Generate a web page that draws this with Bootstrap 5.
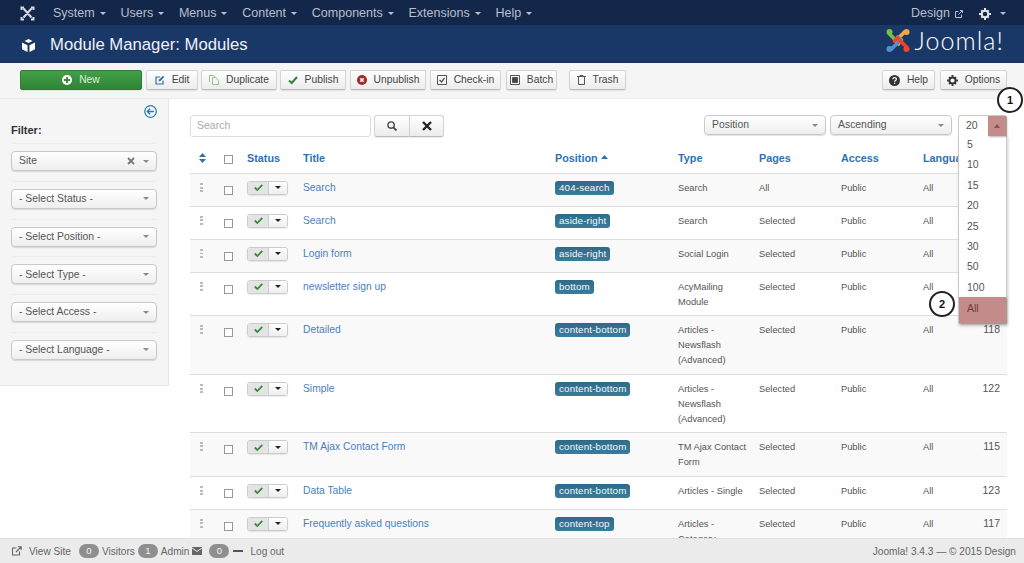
<!DOCTYPE html>
<html lang="en">
<head>
<meta charset="utf-8">
<title>Module Manager: Modules</title>
<link rel="stylesheet" href="https://cdn.jsdelivr.net/npm/bootstrap@5.3.0/dist/css/bootstrap.min.css">
<style>
html,body{height:563px;overflow:hidden}
body{font-family:"Liberation Sans",Arial,sans-serif;font-size:10.5px;color:#555;background:#fff;position:relative}
svg{display:block;flex:none}
.top-bar{height:25px;background:#13274a;color:#b9bfcb;font-size:12.5px;padding:2px 18px 0 20px}
.top-item{display:flex;align-items:center;gap:5px}
.top-menu{gap:14.800px;margin-left:18px}
.caret-d{width:0;height:0;border-left:3px solid transparent;border-right:3px solid transparent;border-top:3px solid currentColor;display:inline-block;flex:none}
.title-bar{height:38px;background:#1a3867;color:#eef1f6;padding:0 20px 0 21px;border-bottom:1px solid #17325c}
.title-wrap{padding-top:3px}
.title-bar h1{font-size:16.700px;font-weight:400;margin:0 0 0 14px}
.logo-wrap{margin-bottom:6px}
.logo-txt{font-family:Lato,"Liberation Sans",sans-serif;font-weight:300;font-size:25px;color:#fff;margin-left:3px;letter-spacing:1.100px;line-height:1}
.tool-bar{height:36px;background:#f5f5f5;border-bottom:1px solid #ebebeb;padding:7px 17px 0 20px;gap:4px}
.tbtn{display:flex;align-items:center;justify-content:center;gap:7px;height:20px;font-size:10.3px;color:#444;background:linear-gradient(#fff,#ececec);border:1px solid #d3d3d3;border-bottom-color:#bbb;border-radius:2px;box-shadow:0 1px 1px rgba(0,0,0,.08);white-space:nowrap}
.tbtn-new{width:122px;background:linear-gradient(#43a047,#2f8436);border-color:#2f7d34;color:#dcefdc}
.wid-edit{width:52px}.wid-dup{width:76px;margin-left:-1px}.wid-pub{width:66px;margin-left:-1px}.wid-unp{width:76px}.wid-chk{width:71px}.wid-bat{width:51px;margin-left:1px}.wid-tra{width:57px;margin-left:8px}.wid-hlp{width:53px}.wid-opt{width:67px;margin-left:1px}
.content-row{flex:1 1 auto;min-height:0;overflow:hidden}
.side-panel{width:169px;height:287px;background:#f5f5f5;border-right:1px solid #e6e6e6;border-bottom:1px solid #e6e6e6;padding:6px 11px 0 11px;flex:none}
.side-head{font-weight:700;font-size:11px;color:#333;height:20px;padding-top:5px;margin-bottom:6px}
.back-row{height:12px}
.flt{height:37.800px;border-top:1px solid #ececec;padding-top:7px}
.pick{height:20px;display:flex;align-items:center;justify-content:space-between;padding:0 7px;background:linear-gradient(#fff,#eee);border:1px solid #c9c9c9;border-radius:4px;box-shadow:0 1px 1px rgba(0,0,0,.12);font-size:10.4px;color:#555;white-space:nowrap}
.caret-g{color:#888}
.main-col{flex:1 1 auto;min-width:0;padding:16px 17px 0 21px}
.search-row{height:25px;margin-bottom:8px}
.search-box{width:181px;height:22px;border:1px solid #ddd;border-radius:3px;padding:0 6px;color:#aaa;display:flex;align-items:center;font-size:10.5px}
.sbtn{height:22px;padding:0}
.sbtn-first{width:35px;margin-left:3px;border-radius:3px 0 0 3px;border-right:0}
.sbtn-second{width:35px;border-radius:0 3px 3px 0}
.sel1{width:122px;height:20px}
.sel2{margin-left:4px}
.sel3{width:50px;margin-left:5px;height:20px}
table.mods{width:100%;table-layout:fixed;border-collapse:collapse;margin:0}
table.mods th{color:#3071b2;font-size:10.8px;font-weight:700;height:25px;padding:0 0 4px;vertical-align:middle;white-space:nowrap;overflow:hidden;background:#fff}
table.mods td{border-top:1px solid #ddd;vertical-align:top;padding:7px 0 5px;line-height:15.200px;font-size:9.3px;color:#555;height:33px}
table.mods tr:nth-child(odd) td{background:#f9f9f9}
table.mods td.ttl{font-size:10.300px;color:#4b7fbb;padding-top:6px}
table.mods td.idn{font-size:10.5px;text-align:right;padding:6px 7px 0 0}
.cb{width:9px;height:9px;border:1px solid #999;background:#fff;display:block;margin:5px 0 0 2px}
th .cb{margin-top:3px}
.grip{width:3px;height:9px;background:repeating-linear-gradient(#bbb 0 2px,transparent 2px 3.5px);margin:2px 0 0 10px}
.stat{display:flex;width:41px;height:14px;border:1px solid #ccc;border-radius:3px;overflow:hidden;background:#fff;margin-top:0;box-shadow:0 1px 1px rgba(0,0,0,.08)}
.stat>span{display:flex;align-items:center;justify-content:center}
.stat .st-l{width:21px;background:#e4e4e4;border-right:1px solid #ccc}
.stat .st-r{flex:1;color:#222;background:linear-gradient(#fff,#eee)}
.tag{display:inline-block;background:linear-gradient(#2f6b88,#3a7c9c);color:#f4f7f9;font-size:9.8px;font-weight:400;letter-spacing:.15px;line-height:14px;border-radius:3px;padding:0 4px;white-space:nowrap;vertical-align:0}
.foot-bar{height:25px;background:#ebebeb;border-top:1px solid #e0e0e0;padding:1px 8px 0 12px;font-size:10.100px;color:#666;flex:none;white-space:nowrap}
.pill{display:inline-block;background:#8f8f8f;color:#f2f2f2;font-size:9.5px;line-height:14px;width:20px;text-align:center;border-radius:7px}
.drop-menu{position:absolute;left:958px;top:135px;width:49px;height:189px;background:#fff;border:1px solid #ccc;border-top:0;box-shadow:1px 2px 3px rgba(0,0,0,.2);font-size:10.5px;color:#555;z-index:5}
.drop-menu div{height:20.400px;padding-left:8px;line-height:18px}
.drop-menu .sel-all{position:absolute;left:0;right:0;bottom:0;height:26px;line-height:22px;background:#c48b8b;color:#6d3b3d;box-shadow:1px 1px 2px rgba(0,0,0,.35)}
.drop-toggle{position:absolute;left:958px;top:115px;width:49px;height:20px;background:#fff;border:1px solid #ccc;border-bottom:0;z-index:6;font-size:10.5px;color:#555;padding-left:7px;line-height:19px;border-radius:3px 3px 0 0}
.drop-toggle i{position:absolute;right:0;top:0;width:18px;height:20px;background:#c48b8b;box-shadow:1px 1px 2px rgba(0,0,0,.3)}
.drop-toggle b{position:absolute;right:6px;top:8px;width:0;height:0;border-left:3px solid transparent;border-right:3px solid transparent;border-bottom:4px solid #7d5557}
.mark-c{position:absolute;width:26px;height:26px;border:2px solid #222;border-radius:50%;background:#fff;color:#111;font-weight:700;font-size:11px;display:flex;align-items:center;justify-content:center;z-index:7}
.mark-1{left:997px;top:87px}
.mark-2{left:929px;top:291px}
.hdr-arr{color:#3071b2}
.foot-g1{gap:3px}
.foot-view{margin-right:5px}
.foot-minus{margin:0 4px 0 1px}
</style>
</head>
<body class="d-flex flex-column">

<nav class="top-bar d-flex align-items-center justify-content-between flex-shrink-0">
  <div class="d-flex align-items-center">
    <svg width="15" height="15" viewBox="0 0 15 15" fill="none" stroke="#d6dae2" stroke-width="2" aria-hidden="true"><path d="M3.500 2.500l8 9M11.500 2.500l-8 9M1.500 4V1.500H4M13.500 4V1.500H11M1.500 11v2.500H4M13.500 11v2.500H11"/></svg>
    <div class="top-menu d-flex align-items-center">
      <span class="top-item">System<i class="caret-d"></i></span>
      <span class="top-item">Users<i class="caret-d"></i></span>
      <span class="top-item">Menus<i class="caret-d"></i></span>
      <span class="top-item">Content<i class="caret-d"></i></span>
      <span class="top-item">Components<i class="caret-d"></i></span>
      <span class="top-item">Extensions<i class="caret-d"></i></span>
      <span class="top-item">Help<i class="caret-d"></i></span>
    </div>
  </div>
  <div class="d-flex align-items-center gap-3">
    <span class="top-item">Design
      <svg width="8" height="8" viewBox="0 0 8 8" fill="none" stroke="currentColor"><path d="M6.500 4.500v3h-6v-6h3M3.500 4.500l4-4M5 .5h2.500V3"/></svg>
    </span>
    <span class="top-item">
      <svg width="12" height="12" viewBox="0 0 12 12" aria-hidden="true"><circle cx="6" cy="6" r="3.300" fill="none" stroke="#e3e6ec" stroke-width="2"/><path d="M5 0h2v2H5zM5 10h2v2H5zM0 5h2v2H0zM10 5h2v2h-2zM1.500 3L3 1.500 4 2.800 2.800 4zM9 1.500L10.500 3 9.200 4 8 2.800zM1.500 9L2.800 8 4 9.200 3 10.500zM10.500 9L9 10.500 8 9.200 9.200 8z" fill="#e3e6ec"/></svg>
      <i class="caret-d ms-1"></i>
    </span>
  </div>
</nav>

<header class="title-bar d-flex align-items-center justify-content-between flex-shrink-0">
  <div class="title-wrap d-flex align-items-center">
    <svg width="15" height="15" viewBox="0 0 15 15" fill="#fff" aria-hidden="true"><path d="M7.500 1L11.500 3 7.500 5 3.500 3zM1 4.500l5.500 2.700V14L1 11.300zM14 4.500L8.500 7.200V14l5.500-2.700z"/></svg>
    <h1>Module Manager: Modules</h1>
  </div>
  <div class="logo-wrap d-flex align-items-center">
    <svg width="26" height="25" viewBox="0 0 25 25" fill="none" stroke-width="3.600" stroke-linecap="round" stroke-linejoin="round" aria-hidden="true">
      <path d="M4 6l9 9 3-3" stroke="#7ac143"/><path d="M19 4L10 13l3 3" stroke="#f9a541" /><path d="M6 21l9-9-3-3" stroke="#5091cd"/><path d="M21 19l-9-9-3 3" stroke="#f44321"/>
      <circle cx="4" cy="4" r="3" fill="#7ac143" stroke="none"/><circle cx="21" cy="4" r="3" fill="#f9a541" stroke="none"/><circle cx="4" cy="21" r="3" fill="#5091cd" stroke="none"/><circle cx="21" cy="21" r="3" fill="#f44321" stroke="none"/>
    </svg>
    <span class="logo-txt">Joomla!</span>
  </div>
</header>

<div class="tool-bar d-flex align-items-start flex-shrink-0">
  <span class="tbtn tbtn-new"><svg width="10" height="10" viewBox="0 0 10 10"><circle cx="5" cy="5" r="5" fill="#fff"/><path d="M5 2v6M2 5h6" stroke="#35893b" stroke-width="1.800"/></svg>New</span>
  <span class="tbtn wid-edit"><svg width="10" height="10" viewBox="0 0 10 10" fill="none" stroke="#3071a9" stroke-width="1.200"><path d="M8 5.500V9H1V2h4"/><path d="M3.500 6.500l.5-2L8 .8 9.200 2 5.500 6z" fill="#3071a9" stroke="none"/></svg>Edit</span>
  <span class="tbtn wid-dup"><svg width="10" height="10" viewBox="0 0 10 10" fill="none" stroke="#9bbf8e"><path d="M.5 7V.5h4l2 2M3.500 2.500h3l3 3v4h-6z"/></svg>Duplicate</span>
  <span class="tbtn wid-pub"><svg width="10" height="10" viewBox="0 0 10 10" fill="none" stroke="#378137" stroke-width="2"><path d="M1 5.500l2.700 2.500L9 2"/></svg>Publish</span>
  <span class="tbtn wid-unp"><svg width="10" height="10" viewBox="0 0 10 10"><circle cx="5" cy="5" r="5" fill="#a12a2a"/><path d="M3.200 3.200l3.600 3.600M6.800 3.200L3.200 6.800" stroke="#fff" stroke-width="1.500"/></svg>Unpublish</span>
  <span class="tbtn wid-chk"><svg width="10" height="10" viewBox="0 0 10 10" fill="none" stroke="#555"><path d="M.5.500h9v9h-9z"/><path d="M2.500 5l2 2 3-4" stroke-width="1.300"/></svg>Check-in</span>
  <span class="tbtn wid-bat"><svg width="10" height="10" viewBox="0 0 10 10" fill="none" stroke="#555"><path d="M.5.500h9v9h-9z"/><path d="M2.500 2.500h5v5h-5z" fill="#444"/></svg>Batch</span>
  <span class="tbtn wid-tra"><svg width="9" height="10" viewBox="0 0 9 10" fill="none" stroke="#555"><path d="M0 1.500h9M3 1.500V.5h3v1M1.500 1.500v8h6v-8"/></svg>Trash</span>
  <span class="tbtn wid-hlp ms-auto"><svg width="11" height="11" viewBox="0 0 11 11"><circle cx="5.500" cy="5.500" r="5.500" fill="#333"/><path d="M3.800 4.300c0-2.200 3.600-2.200 3.600-.1 0 1.300-1.800 1.200-1.800 2.500M5.600 7.700v1.200" fill="none" stroke="#fff" stroke-width="1.200"/></svg>Help</span>
  <span class="tbtn wid-opt"><svg width="11" height="11" viewBox="0 0 12 12" aria-hidden="true"><circle cx="6" cy="6" r="3.300" fill="none" stroke="#333" stroke-width="2"/><path d="M5 0h2v2H5zM5 10h2v2H5zM0 5h2v2H0zM10 5h2v2h-2zM1.500 3L3 1.500 4 2.800 2.800 4zM9 1.500L10.500 3 9.200 4 8 2.800zM1.500 9L2.800 8 4 9.200 3 10.500zM10.500 9L9 10.500 8 9.200 9.200 8z" fill="#333"/></svg>Options</span>
</div>

<div class="content-row d-flex">
  <aside class="side-panel">
    <div class="back-row d-flex justify-content-end">
      <svg width="13" height="13" viewBox="0 0 13 13" fill="none" stroke="#2a79b8" stroke-width="1.200"><circle cx="6.500" cy="6.500" r="5.800"/><path d="M10 6.500H3.500M6 3.800L3.300 6.500 6 9.200" stroke-width="1.400"/></svg>
    </div>
    <div class="side-head">Filter:</div>
    <div class="flt"><div class="pick"><span>Site</span><span class="d-flex align-items-center gap-2"><svg width="8" height="8" viewBox="0 0 8 8" stroke="#777" stroke-width="1.800"><path d="M1 1l6 6M7 1L1 7"/></svg><i class="caret-d caret-g"></i></span></div></div>
    <div class="flt"><div class="pick"><span>- Select Status -</span><i class="caret-d caret-g"></i></div></div>
    <div class="flt"><div class="pick"><span>- Select Position -</span><i class="caret-d caret-g"></i></div></div>
    <div class="flt"><div class="pick"><span>- Select Type -</span><i class="caret-d caret-g"></i></div></div>
    <div class="flt"><div class="pick"><span>- Select Access -</span><i class="caret-d caret-g"></i></div></div>
    <div class="flt"><div class="pick"><span>- Select Language -</span><i class="caret-d caret-g"></i></div></div>
  </aside>

  <main class="main-col">
    <div class="search-row d-flex align-items-start">
      <div class="search-box">Search</div>
      <span class="tbtn sbtn sbtn-first"><svg width="10" height="10" viewBox="0 0 11 11" fill="none" stroke="#444" stroke-width="1.500"><circle cx="4.500" cy="4.500" r="3.500"/><path d="M7 7l3.500 3.500" stroke-width="2"/></svg></span>
      <span class="tbtn sbtn sbtn-second"><svg width="10" height="10" viewBox="0 0 10 10" stroke="#222" stroke-width="2.400"><path d="M1 1l8 8M9 1L1 9"/></svg></span>
      <div class="pick sel1 ms-auto"><span>Position</span><i class="caret-d caret-g"></i></div>
      <div class="pick sel1 sel2"><span>Ascending</span><i class="caret-d caret-g"></i></div>
      <div class="sel3"></div>
    </div>

    <table class="mods">
      <colgroup><col style="width:32px"><col style="width:25px"><col style="width:56px"><col style="width:252px"><col style="width:123px"><col style="width:81px"><col style="width:82px"><col style="width:82px"><col style="width:40px"><col></colgroup>
      <thead><tr>
        <th><svg class="hdr-arr" style="margin-left:9px" width="7" height="10" viewBox="0 0 7 10" fill="currentColor"><path d="M3.500 0L7 4H0zM0 6h7l-3.500 4z"/></svg></th>
        <th><span class="cb"></span></th>
        <th>Status</th><th>Title</th>
        <th>Position <svg class="d-inline-block mb-1" width="7" height="4" viewBox="0 0 7 4" fill="currentColor"><path d="M3.500 0L7 4H0z"/></svg></th>
        <th>Type</th><th>Pages</th><th>Access</th><th>Language</th><th></th>
      </tr></thead>
      <tbody>
        <tr><td><div class="grip"></div></td><td><span class="cb"></span></td><td><div class="stat"><span class="st-l"><svg width="9" height="7" viewBox="0 0 9 7" fill="none" stroke="#3a8c3f" stroke-width="1.800"><path d="M.8 3.500L3.300 6 8.300.8"/></svg></span><span class="st-r"><i class="caret-d"></i></span></div></td><td class="ttl">Search</td><td><span class="tag">404-search</span></td><td>Search</td><td>All</td><td>Public</td><td>All</td><td></td></tr>
        <tr><td><div class="grip"></div></td><td><span class="cb"></span></td><td><div class="stat"><span class="st-l"><svg width="9" height="7" viewBox="0 0 9 7" fill="none" stroke="#3a8c3f" stroke-width="1.800"><path d="M.8 3.500L3.300 6 8.300.8"/></svg></span><span class="st-r"><i class="caret-d"></i></span></div></td><td class="ttl">Search</td><td><span class="tag">aside-right</span></td><td>Search</td><td>Selected</td><td>Public</td><td>All</td><td></td></tr>
        <tr><td><div class="grip"></div></td><td><span class="cb"></span></td><td><div class="stat"><span class="st-l"><svg width="9" height="7" viewBox="0 0 9 7" fill="none" stroke="#3a8c3f" stroke-width="1.800"><path d="M.8 3.500L3.300 6 8.300.8"/></svg></span><span class="st-r"><i class="caret-d"></i></span></div></td><td class="ttl">Login form</td><td><span class="tag">aside-right</span></td><td>Social Login</td><td>Selected</td><td>Public</td><td>All</td><td></td></tr>
        <tr><td><div class="grip"></div></td><td><span class="cb"></span></td><td><div class="stat"><span class="st-l"><svg width="9" height="7" viewBox="0 0 9 7" fill="none" stroke="#3a8c3f" stroke-width="1.800"><path d="M.8 3.500L3.300 6 8.300.8"/></svg></span><span class="st-r"><i class="caret-d"></i></span></div></td><td class="ttl">newsletter sign up</td><td><span class="tag">bottom</span></td><td>AcyMailing<br>Module</td><td>Selected</td><td>Public</td><td>All</td><td></td></tr>
        <tr><td><div class="grip"></div></td><td><span class="cb"></span></td><td><div class="stat"><span class="st-l"><svg width="9" height="7" viewBox="0 0 9 7" fill="none" stroke="#3a8c3f" stroke-width="1.800"><path d="M.8 3.500L3.300 6 8.300.8"/></svg></span><span class="st-r"><i class="caret-d"></i></span></div></td><td class="ttl">Detailed</td><td><span class="tag">content-bottom</span></td><td>Articles -<br>Newsflash<br>(Advanced)</td><td>Selected</td><td>Public</td><td>All</td><td class="idn">118</td></tr>
        <tr><td><div class="grip"></div></td><td><span class="cb"></span></td><td><div class="stat"><span class="st-l"><svg width="9" height="7" viewBox="0 0 9 7" fill="none" stroke="#3a8c3f" stroke-width="1.800"><path d="M.8 3.500L3.300 6 8.300.8"/></svg></span><span class="st-r"><i class="caret-d"></i></span></div></td><td class="ttl">Simple</td><td><span class="tag">content-bottom</span></td><td>Articles -<br>Newsflash<br>(Advanced)</td><td>Selected</td><td>Public</td><td>All</td><td class="idn">122</td></tr>
        <tr><td><div class="grip"></div></td><td><span class="cb"></span></td><td><div class="stat"><span class="st-l"><svg width="9" height="7" viewBox="0 0 9 7" fill="none" stroke="#3a8c3f" stroke-width="1.800"><path d="M.8 3.500L3.300 6 8.300.8"/></svg></span><span class="st-r"><i class="caret-d"></i></span></div></td><td class="ttl">TM Ajax Contact Form</td><td><span class="tag">content-bottom</span></td><td>TM Ajax Contact<br>Form</td><td>Selected</td><td>Public</td><td>All</td><td class="idn">115</td></tr>
        <tr><td><div class="grip"></div></td><td><span class="cb"></span></td><td><div class="stat"><span class="st-l"><svg width="9" height="7" viewBox="0 0 9 7" fill="none" stroke="#3a8c3f" stroke-width="1.800"><path d="M.8 3.500L3.300 6 8.300.8"/></svg></span><span class="st-r"><i class="caret-d"></i></span></div></td><td class="ttl">Data Table</td><td><span class="tag">content-bottom</span></td><td>Articles - Single</td><td>Selected</td><td>Public</td><td>All</td><td class="idn">123</td></tr>
        <tr><td><div class="grip"></div></td><td><span class="cb"></span></td><td><div class="stat"><span class="st-l"><svg width="9" height="7" viewBox="0 0 9 7" fill="none" stroke="#3a8c3f" stroke-width="1.800"><path d="M.8 3.500L3.300 6 8.300.8"/></svg></span><span class="st-r"><i class="caret-d"></i></span></div></td><td class="ttl">Frequently asked questions</td><td><span class="tag">content-top</span></td><td>Articles -<br>Category</td><td>Selected</td><td>Public</td><td>All</td><td class="idn">117</td></tr>
      </tbody>
    </table>
  </main>
</div>

<footer class="foot-bar d-flex align-items-center justify-content-between">
  <div class="d-flex align-items-center foot-g1">
    <svg class="me-1" width="10" height="10" viewBox="0 0 10 10" fill="none" stroke="#666" stroke-width="1.100"><path d="M7.500 5.500v3.500h-7V2h4M4 6l5-5M6 .8h3.200V4"/></svg>
    <span class="foot-view">View Site</span>
    <span class="pill">0</span><span>Visitors</span>
    <span class="pill">1</span><span>Admin</span>
    <svg width="10" height="8" viewBox="0 0 10 8"><path d="M0 0h10v8H0z" fill="#666"/><path d="M0 1l5 3.500L10 1" fill="none" stroke="#e9e9e9"/></svg>
    <span class="pill ms-1">0</span>
    <svg class="foot-minus" width="10" height="2" viewBox="0 0 10 2"><path d="M0 0h10v2H0z" fill="#555"/></svg>
    <span>Log out</span>
  </div>
  <span>Joomla! 3.4.3 — © 2015 Design</span>
</footer>

<div class="drop-toggle">20<i></i><b></b></div>
<div class="drop-menu">
  <div>5</div><div>10</div><div>15</div><div>20</div><div>25</div><div>30</div><div>50</div><div>100</div>
  <div class="sel-all">All</div>
</div>
<span class="mark-c mark-1">1</span>
<span class="mark-c mark-2">2</span>
</body>
</html>
